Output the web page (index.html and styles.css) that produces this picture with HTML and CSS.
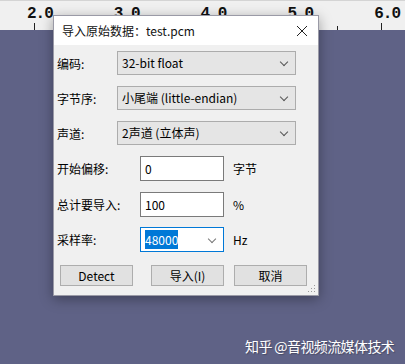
FILE: index.html
```html
<!DOCTYPE html>
<html lang="zh-CN">
<head>
    <meta charset="UTF-8">
    <title>导入原始数据</title>
    <link rel="stylesheet" href="styles.css">
</head>
<body>
    <!-- Timeline ruler -->
    <div class="ruler">
        <div class="mark"><span class="num">2.0</span><span class="tick"></span><span class="tick minor"></span></div>
        <div class="mark"><span class="num">3.0</span><span class="tick"></span><span class="tick minor"></span></div>
        <div class="mark"><span class="num">4.0</span><span class="tick"></span><span class="tick minor"></span></div>
        <div class="mark"><span class="num">5.0</span><span class="tick"></span><span class="tick minor"></span></div>
        <div class="mark last"><span class="num">6.0</span><span class="tick"></span></div>
    </div>

    <div class="track"></div>

    <!-- Import raw data dialog -->
    <div class="dialog">
        <div class="titlebar">
            <span class="title">导入原始数据：test.pcm</span>
            <svg class="close" width="12" height="12" viewBox="0 0 12 12">
                <path d="M1 1 L11 11 M11 1 L1 11" stroke="#222" stroke-width="1" fill="none"/>
            </svg>
        </div>

        <div class="body">
            <div class="row">
                <label>编码:</label>
                <div class="select">32-bit float<span class="chev"></span></div>
            </div>
            <div class="row">
                <label>字节序:</label>
                <div class="select">小尾端 (little-endian)<span class="chev"></span></div>
            </div>
            <div class="row">
                <label>声道:</label>
                <div class="select">2声道 (立体声)<span class="chev"></span></div>
            </div>
            <div class="row short">
                <label>开始偏移:</label>
                <div class="input">0</div>
                <span class="unit">字节</span>
            </div>
            <div class="row short">
                <label>总计要导入:</label>
                <div class="input">100</div>
                <span class="unit">%</span>
            </div>
            <div class="row short">
                <label>采样率:</label>
                <div class="input combo"><span class="sel">48000</span><span class="chev"></span></div>
                <span class="unit">Hz</span>
            </div>

            <div class="buttons">
                <button class="btn">Detect</button>
                <button class="btn import">导入(I)</button>
                <button class="btn cancel">取消</button>
            </div>
        </div>
        <span class="grip"></span>
    </div>

    <div class="watermark">知乎 @音视频流媒体技术</div>
</body>
</html>
```

FILE: styles.css
```css
body {
    margin: 0;
    width: 405px;
    height: 364px;
    overflow: hidden;
    background-color: #5f6286;
    font-family: "Noto Sans CJK SC", "Noto Sans", sans-serif;
    font-size: 12px;
    color: #000;
    position: relative;
}

/* Ruler */
.ruler {
    height: 30px;
    box-sizing: border-box;
    background-color: #f0f0f0;
    border-top: 1px solid #d4d4d4;
    display: flex;
    padding-left: 27px;
    overflow: hidden;
}
.mark {
    position: relative;
    width: 86.8px;
    flex: none;
}
.mark.last { width: 30px; }
.num {
    display: block;
    font-family: "Liberation Mono", monospace;
    font-weight: bold;
    font-size: 16px;
    letter-spacing: -1px;
    line-height: 16px;
    margin-top: 5px;
    color: #111;
}
.tick {
    position: absolute;
    left: 7px;
    bottom: 0;
    width: 1px;
    height: 7px;
    background: #222;
}
.tick.minor { left: 50px; height: 4px; }

.track { height: 334px; }

/* Dialog window */
.dialog {
    position: absolute;
    left: 53px;
    top: 15px;
    width: 266px;
    height: 281px;
    box-sizing: border-box;
    background-color: #f0f0f0;
    border: 1px solid #9a9aa6;
    box-shadow: 0 3px 12px rgba(0, 0, 0, 0.35);
}
.titlebar {
    height: 29px;
    background: #fff;
    display: flex;
    align-items: center;
    justify-content: space-between;
    padding: 0 10px 0 8px;
}
.title { font-size: 12px; color: #111; }
.close { display: block; }

.body { padding: 6px 0 0 3px; }

.row {
    display: flex;
    align-items: center;
    height: 24px;
    margin-bottom: 11px;
}
.row.short { height: 25px; margin-bottom: 10.5px; }
.row label {
    width: 60px;
    flex: none;
}
.row.short label { width: 83px; }

.select {
    position: relative;
    width: 179px;
    height: 24px;
    box-sizing: border-box;
    background: #e5e5e5;
    border: 1px solid #acacac;
    padding-left: 4px;
    line-height: 22px;
}
.chev {
    position: absolute;
    right: 8px;
    top: 7px;
    width: 5px;
    height: 5px;
    border-right: 1px solid #555;
    border-bottom: 1px solid #555;
    transform: rotate(45deg);
}

.input {
    position: relative;
    width: 84px;
    height: 25px;
    box-sizing: border-box;
    background: #fff;
    border: 1px solid #7a7a7a;
    padding-left: 4px;
    line-height: 23px;
}
.input.combo { border-color: #0078d7; }
.combo .sel {
    background: #0078d7;
    color: #fff;
    padding: 1px 0;
}
.combo .chev { top: 8px; border-color: #777; }
.unit { margin-left: 9px; }

.buttons {
    display: flex;
    margin-top: 13px;
    padding-left: 3px;
}
.btn {
    width: 73px;
    height: 21px;
    padding: 0;
    font-family: inherit;
    font-size: 12px;
    background: #e1e1e1;
    border: 1px solid #adadad;
    color: #000;
}
.btn.import { margin-left: 18px; }
.btn.cancel { margin-left: 10px; }

.grip {
    position: absolute;
    right: 3px;
    bottom: 3px;
    width: 8px;
    height: 8px;
    background:
        radial-gradient(circle, #9a9a9a 0.8px, transparent 1px) 0 0 / 3px 3px;
    clip-path: polygon(100% 0, 100% 100%, 0 100%);
}

.watermark {
    position: absolute;
    left: 245px;
    top: 336px;
    color: #fff;
    font-size: 14px;
    letter-spacing: -0.6px;
    text-shadow: 1px 1px 1px rgba(0, 0, 0, 0.25);
}
```
